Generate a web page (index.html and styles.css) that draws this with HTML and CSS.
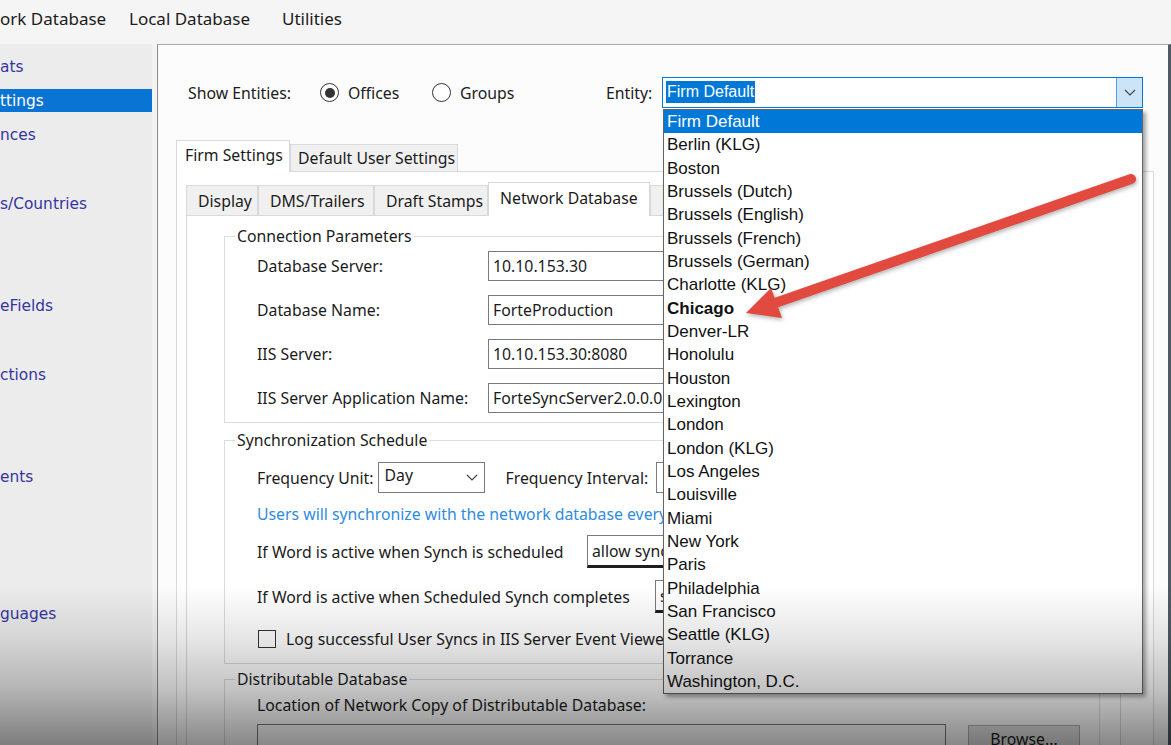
FILE: index.html
```html
<!DOCTYPE html>
<html>
<head>
    <title>Firm Settings</title>
    <link rel="stylesheet" href="styles.css">
</head>
<body>
    <div class="menubar">
        <span class="menu-item m1">ork Database</span>
        <span class="menu-item m2">Local Database</span>
        <span class="menu-item">Utilities</span>
    </div>

    <div class="main">
        <div class="sidebar">
            <div class="side-item">ats</div>
            <div class="side-item selected">ttings</div>
            <div class="side-item">nces</div>
            <div class="side-item"></div>
            <div class="side-item">s/Countries</div>
            <div class="side-item"></div>
            <div class="side-item"></div>
            <div class="side-item">eFields</div>
            <div class="side-item"></div>
            <div class="side-item">ctions</div>
            <div class="side-item"></div>
            <div class="side-item"></div>
            <div class="side-item">ents</div>
            <div class="side-item"></div>
            <div class="side-item"></div>
            <div class="side-item"></div>
            <div class="side-item">guages</div>
        </div>

        <div class="panel">
            <div class="show-row">
                <span class="show-label">Show Entities:</span>
                <span class="radio-opt offices"><span class="radio checked"></span>Offices</span>
                <span class="radio-opt groups"><span class="radio"></span>Groups</span>
                <span class="entity-label">Entity:</span>
                <div class="combo">
                    <span class="combo-text">Firm Default</span>
                    <span class="combo-btn">
                        <svg width="12" height="7" viewBox="0 0 12 7"><path d="M1 1 L6 6 L11 1" fill="none" stroke="#444" stroke-width="1.2"/></svg>
                    </span>
                    <div class="droplist">
                        <div class="hl">Firm Default</div>
                        <div>Berlin (KLG)</div>
                        <div>Boston</div>
                        <div>Brussels (Dutch)</div>
                        <div>Brussels (English)</div>
                        <div>Brussels (French)</div>
                        <div>Brussels (German)</div>
                        <div>Charlotte (KLG)</div>
                        <div class="bold">Chicago</div>
                        <div>Denver-LR</div>
                        <div>Honolulu</div>
                        <div>Houston</div>
                        <div>Lexington</div>
                        <div>London</div>
                        <div>London (KLG)</div>
                        <div>Los Angeles</div>
                        <div>Louisville</div>
                        <div>Miami</div>
                        <div>New York</div>
                        <div>Paris</div>
                        <div>Philadelphia</div>
                        <div>San Francisco</div>
                        <div>Seattle (KLG)</div>
                        <div>Torrance</div>
                        <div>Washington, D.C.</div>
                    </div>
                </div>
            </div>

            <div class="tabs-outer">
                <div class="tabstrip outer-strip">
                    <span class="tab active w-firm">Firm Settings</span>
                    <span class="tab w-user">Default User Settings</span>
                </div>
                <div class="tabpage outer-page">
                    <div class="tabstrip inner-strip">
                        <span class="tab w-display">Display</span>
                        <span class="tab w-dms">DMS/Trailers</span>
                        <span class="tab w-draft">Draft Stamps</span>
                        <span class="tab active w-net">Network Database</span>
                        <span class="tab w-more">Folders</span>
                    </div>
                    <div class="tabpage inner-page">
                        <fieldset class="group conn">
                            <legend>Connection Parameters</legend>
                            <div class="field-row">
                                <span class="field-label">Database Server:</span>
                                <span class="textbox">10.10.153.30</span>
                            </div>
                            <div class="field-row">
                                <span class="field-label">Database Name:</span>
                                <span class="textbox">ForteProduction</span>
                            </div>
                            <div class="field-row">
                                <span class="field-label">IIS Server:</span>
                                <span class="textbox">10.10.153.30:8080</span>
                            </div>
                            <div class="field-row">
                                <span class="field-label">IIS Server Application Name:</span>
                                <span class="textbox">ForteSyncServer2.0.0.0</span>
                            </div>
                        </fieldset>

                        <fieldset class="group sync">
                            <legend>Synchronization Schedule</legend>
                            <div class="freq-row">
                                <span>Frequency Unit:</span>
                                <span class="select day">Day
                                    <svg width="12" height="7" viewBox="0 0 12 7"><path d="M1 1 L6 6 L11 1" fill="none" stroke="#444" stroke-width="1.2"/></svg>
                                </span>
                                <span class="freq-interval">Frequency Interval:</span>
                                <span class="select interval"></span>
                            </div>
                            <div class="sync-note">Users will synchronize with the network database every day</div>
                            <div class="word-row scheduled">
                                <span class="word-label w1">If Word is active when Synch is scheduled</span>
                                <span class="select dark">allow sync</span>
                            </div>
                            <div class="word-row completes">
                                <span class="word-label w2">If Word is active when Scheduled Synch completes</span>
                                <span class="select dark">show</span>
                            </div>
                            <div class="check-row">
                                <span class="checkbox"></span>
                                <span>Log successful User Syncs in IIS Server Event Viewer</span>
                            </div>
                        </fieldset>

                        <fieldset class="group dist">
                            <legend>Distributable Database</legend>
                            <div class="dist-label">Location of Network Copy of Distributable Database:</div>
                            <div class="dist-row">
                                <span class="textbox path"></span>
                                <span class="button">Browse...</span>
                            </div>
                        </fieldset>
                    </div>
                </div>
            </div>
        </div>
    </div>

    <svg class="arrow" width="1171" height="745" viewBox="0 0 1171 745">
        <line x1="1131" y1="179" x2="775" y2="303" stroke="#e2493f" stroke-width="10" stroke-linecap="round"/>
        <polygon points="746,313 771,288 782,318" fill="#e2493f"/>
    </svg>

    <div class="shade"></div>
</body>
</html>
```

FILE: styles.css
```css
* {
    box-sizing: border-box;
}

html, body {
    margin: 0;
    padding: 0;
}

body {
    width: 1171px;
    height: 745px;
    overflow: hidden;
    position: relative;
    background-color: #f3f3f3;
    font-family: "Noto Sans", "Liberation Sans", sans-serif;
    font-size: 15.8px;
    color: #1b1b1b;
}

/* top menu */
.menubar {
    height: 44px;
    display: flex;
    align-items: center;
    padding-bottom: 8px;
    font-size: 17px;
    background-color: #f5f5f5;
    white-space: nowrap;
}

.menu-item.m1 {
    width: 129px;
}

.menu-item.m2 {
    width: 153px;
}

.main {
    display: flex;
    height: 701px;
    overflow: hidden;
}

/* left list */
.sidebar {
    width: 152px;
    flex-shrink: 0;
    background-color: #ececec;
    padding-top: 11px;
    display: flex;
    flex-direction: column;
    gap: 11.2px;
    font-family: "DejaVu Sans", sans-serif;
    font-size: 15.4px;
    color: #35359f;
    overflow: hidden;
}

.side-item {
    height: 23px;
    line-height: 25px;
    white-space: nowrap;
}

.side-item.selected {
    background-color: #0a74d4;
    color: #fff;
}

.panel {
    flex: 1;
    margin-left: 5px;
    background-color: #fcfcfc;
    border-left: 1px solid #8c8c8c;
    border-top: 1px solid #a9a9a9;
    border-right: 3px solid #505a66;
    overflow: hidden;
}

/* entity chooser */
.show-row {
    display: flex;
    align-items: center;
    height: 31px;
    margin: 32px 0 0 30px;
    white-space: nowrap;
}

.show-label {
    width: 132px;
}

.radio-opt {
    display: flex;
    align-items: center;
    gap: 9px;
}

.radio-opt.offices {
    width: 112px;
}

.radio-opt.groups {
    width: 174px;
}

.radio {
    width: 19px;
    height: 19px;
    border: 1px solid #333;
    border-radius: 50%;
    background-color: #fff;
    display: flex;
    align-items: center;
    justify-content: center;
}

.radio.checked::after {
    content: "";
    width: 10px;
    height: 10px;
    border-radius: 50%;
    background-color: #333;
}

.entity-label {
    width: 56px;
}

.combo {
    position: relative;
    width: 481px;
    height: 31px;
    border: 1px solid #0078d7;
    background-color: #fff;
    display: flex;
    align-items: center;
    font-family: "Liberation Sans", sans-serif;
    font-size: 16px;
}

.combo-text {
    margin-left: 3px;
    margin-bottom: 2px;
    padding: 0 1px;
    line-height: 22px;
    background-color: #0078d7;
    color: #fff;
}

.combo-btn {
    margin-left: auto;
    width: 26px;
    height: 100%;
    background-color: #cce4f7;
    border-left: 1px solid #569de5;
    display: flex;
    align-items: center;
    justify-content: center;
}

.droplist {
    position: absolute;
    top: 31px;
    left: 0;
    width: 480px;
    background-color: #fff;
    border: 1px solid #646464;
    box-shadow: 3px 3px 4px rgba(0, 0, 0, 0.35);
    font-size: 17px;
    color: #111;
    z-index: 5;
}

.droplist div {
    height: 23.33px;
    line-height: 23.33px;
    padding-left: 3px;
}

.droplist .hl {
    background-color: #0078d7;
    color: #fff;
}

.droplist .bold {
    font-weight: bold;
}

/* tabs */
.tabs-outer {
    margin: 32px 0 0 18px;
}

.tabstrip {
    display: flex;
    align-items: flex-end;
    white-space: nowrap;
}

.outer-strip {
    height: 31px;
}

.inner-strip {
    height: 33px;
}

.tab {
    height: 27px;
    padding-left: 7px;
    display: flex;
    align-items: center;
    background-color: #f0f0f0;
    border: 1px solid #d9d9d9;
    border-bottom: none;
}

.inner-strip .tab {
    height: 30px;
    padding-left: 11px;
}

.tab.active {
    position: relative;
    z-index: 1;
    height: 32px;
    margin-bottom: -1px;
    padding-bottom: 3px;
    background-color: #fff;
    padding-left: 8px;
}

.inner-strip .tab.active {
    height: 34px;
    padding-left: 11px;
}

.w-firm { width: 114px; }
.w-user { width: 168px; }
.w-display { width: 72px; }
.w-dms { width: 116px; }
.w-draft { width: 114px; }
.w-net { width: 162px; }
.w-more { width: 90px; }

.tabpage {
    background-color: #fff;
    border: 1px solid #d9d9d9;
}

.outer-page {
    width: 978px;
    height: 600px;
    padding: 10px 0 0 9px;
}

.inner-page {
    width: 935px;
    height: 600px;
    padding: 10px 20px 0 37px;
}

/* group boxes */
.group {
    margin: 0;
    border: 1px solid #dcdcdc;
    padding: 0 0 0 32px;
}

.group legend {
    margin-left: -22px;
    padding: 0 2px;
    line-height: 20px;
}

.conn {
    padding-top: 5px;
    padding-bottom: 9px;
}

.field-row {
    display: flex;
    align-items: center;
    height: 30px;
    margin-bottom: 14px;
}

.field-row:last-child {
    margin-bottom: 0;
}

.field-label {
    width: 231px;
}

.textbox {
    width: 200px;
    height: 30px;
    border: 1px solid #7a7a7a;
    background-color: #fff;
    padding-left: 4px;
    display: flex;
    align-items: center;
    white-space: nowrap;
    overflow: hidden;
}

.sync {
    margin-top: 7px;
    padding-top: 12px;
    padding-bottom: 14px;
}

.freq-row {
    display: flex;
    align-items: center;
    height: 31px;
    white-space: nowrap;
}

.select {
    height: 31px;
    border: 1px solid #7a7a7a;
    background-color: #fff;
    display: flex;
    align-items: center;
    padding: 0 6px;
    white-space: nowrap;
    overflow: hidden;
}

.select.day {
    width: 107px;
    margin-left: 4px;
    justify-content: space-between;
    padding-bottom: 6px;
}

.select.day svg {
    margin-top: 6px;
}

.freq-interval {
    margin-left: 21px;
}

.select.interval {
    width: 60px;
    margin-left: 8px;
}

.sync-note {
    margin-top: 10px;
    height: 22px;
    line-height: 22px;
    color: #2f8be0;
    white-space: nowrap;
}

.word-row {
    display: flex;
    align-items: center;
    white-space: nowrap;
}

.word-row.scheduled {
    margin-top: 10px;
    height: 33px;
}

.word-row.completes {
    margin-top: 12px;
    height: 33px;
}

.word-label.w1 {
    width: 330px;
}

.word-label.w2 {
    width: 398px;
}

.select.dark {
    width: 120px;
    height: 33px;
    padding-left: 4px;
    border-bottom: 3px solid #1e1e1e;
}

.check-row {
    display: flex;
    align-items: center;
    gap: 10px;
    margin-top: 16px;
    height: 20px;
    white-space: nowrap;
}

.checkbox {
    width: 18px;
    height: 18px;
    margin-left: 1px;
    border: 1px solid #333;
    background-color: #fff;
}

.dist {
    margin-top: 5px;
    padding-top: 5px;
    padding-bottom: 20px;
}

.dist-label {
    height: 22px;
    line-height: 22px;
}

.dist-row {
    display: flex;
    align-items: flex-start;
    margin-top: 8px;
}

.textbox.path {
    width: 689px;
    height: 30px;
}

.button {
    margin-left: 22px;
    margin-top: 1px;
    width: 112px;
    height: 28px;
    border: 1px solid #adadad;
    background-color: #e1e1e1;
    display: flex;
    align-items: center;
    justify-content: center;
}

/* annotation + video shading */
.arrow {
    position: absolute;
    left: 0;
    top: 0;
    z-index: 8;
    pointer-events: none;
    filter: drop-shadow(1px 2px 2px rgba(0, 0, 0, 0.3));
}

.shade {
    position: absolute;
    inset: 0;
    z-index: 10;
    pointer-events: none;
    background: linear-gradient(to bottom,
        rgba(0, 0, 0, 0) 0,
        rgba(0, 0, 0, 0) 585px,
        rgba(0, 0, 0, 0.1) 640px,
        rgba(0, 0, 0, 0.24) 690px,
        rgba(0, 0, 0, 0.47) 745px);
}
```
